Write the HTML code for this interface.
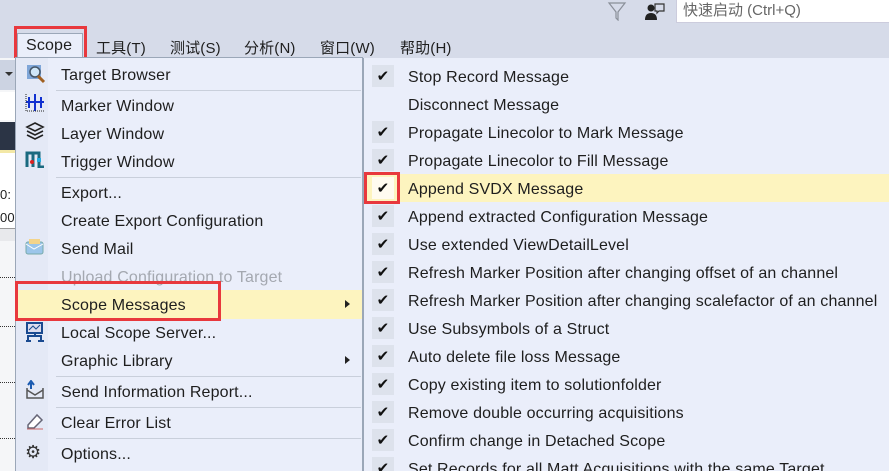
<!DOCTYPE html>
<html><head><meta charset="utf-8"><style>
*{margin:0;padding:0;box-sizing:border-box}
html,body{width:889px;height:471px;overflow:hidden}
body{background:#d6dbe9;position:relative;font-family:"Liberation Sans","Noto Sans CJK SC",sans-serif;font-size:16px;color:#1e1e1e;letter-spacing:0.15px}
.abs{position:absolute}
.mb{top:38px;font-size:15px;color:#1e1e1e}
.mm{left:15px;top:57px;width:348px;height:414px;background:#eaeefa;border:1px solid #9ba7b8;border-bottom:none}
.it{position:absolute;left:45px;height:28px;line-height:28px;white-space:nowrap}
.sep{position:absolute;left:40px;width:305px;height:1px;background:#c9cfdb}
.sm{left:363px;top:58px;width:526px;height:413px;background:#eaeefa;border-left:1px solid #9ba7b8}
.row{position:absolute;left:0;width:526px;height:28px;line-height:28px;white-space:nowrap}
.ck{position:absolute;left:8px;top:3px;width:22px;height:22px;background:#dde2ec;text-align:center;line-height:22px;font-size:15px;color:#111;font-family:"DejaVu Sans",sans-serif}
.tx{position:absolute;left:44px;top:2px}
.red{border:3px solid #e8383d;position:absolute}
</style></head><body>
<svg class="abs" style="left:607px;top:1px" width="20" height="20"><path d="M2 2H18L11 11V19L9 17V11Z" fill="none" stroke="#8a8f99" stroke-width="1.2"/></svg>
<svg class="abs" style="left:644px;top:3px" width="22" height="18"><circle cx="7" cy="5" r="3.5" fill="#222"/><path d="M1 17Q1 10 7 10Q13 10 13 17Z" fill="#222"/><path d="M11 1H20V8H15L13 10V8H11Z" fill="none" stroke="#333" stroke-width="1.2"/></svg>
<div class="abs" style="left:676px;top:0;width:213px;height:23px;background:#fff;border-left:1px solid #ccd;border-bottom:1px solid #ccd;color:#666;font-size:15px;line-height:22px;padding-left:6px;letter-spacing:0">快速启动 (Ctrl+Q)</div>
<div class="abs" style="left:17px;top:33px;width:66px;height:25px;background:#eaeefa;border:1px solid #9ba7b8;border-bottom:none"></div>
<div class="abs mb" style="left:26px;top:37px;font-size:16px">Scope</div>
<div class="abs mb" style="left:96px;top:37px">工具(T)</div>
<div class="abs mb" style="left:170px;top:37px">测试(S)</div>
<div class="abs mb" style="left:244px;top:37px">分析(N)</div>
<div class="abs mb" style="left:320px;top:37px">窗口(W)</div>
<div class="abs mb" style="left:400px;top:37px">帮助(H)</div>
<div class="red" style="left:14px;top:26px;width:73px;height:36px"></div>
<div class="abs" style="left:0;top:58px;width:15px;height:413px;background:#f5f6f8"></div>
<div class="abs" style="left:0;top:60px;width:15px;height:30px;background:#ccd3e2"></div>
<div class="abs" style="left:5px;top:72px;width:0;height:0;border-left:4px solid transparent;border-right:4px solid transparent;border-top:4px solid #333"></div>
<div class="abs" style="left:0;top:92px;width:15px;height:28px;background:#fff"></div>
<div class="abs" style="left:0;top:122px;width:15px;height:28px;background:#2b3445"></div>
<div class="abs" style="left:0;top:150px;width:15px;height:3px;background:#f3e8a6"></div>
<div class="abs" style="left:0;top:153px;width:15px;height:30px;background:#fff"></div>
<div class="abs" style="left:0;top:183px;width:15px;height:24px;background:#fff;font-size:13px;line-height:24px">0:</div>
<div class="abs" style="left:0;top:207px;width:15px;height:22px;background:#fff;border-bottom:1px solid #999;font-size:13px;line-height:22px">00</div>
<div class="abs" style="left:0;top:229px;width:15px;height:12px;background:#e8e9ec"></div>
<div class="abs" style="left:0;top:277px;width:15px;border-top:1px dotted #333"></div>
<div class="abs" style="left:0;top:326px;width:15px;border-top:1px dotted #333"></div>
<div class="abs" style="left:0;top:382px;width:15px;border-top:1px dotted #333"></div>
<div class="abs" style="left:0;top:438px;width:15px;border-top:1px dotted #333"></div>
<div class="abs mm">
<div style="position:absolute;left:0;top:0;width:32px;height:413px;background:#e4e9f6"></div>
<div style="position:absolute;left:0;top:232px;width:346px;height:29px;background:#fdf4bf"></div>
<svg style="position:absolute;left:10px;top:6px" width="20" height="20"><rect x="1" y="1" width="14" height="14" fill="#7fa6d8"/><circle cx="9" cy="8" r="5" fill="#cfe6f8" stroke="#456" stroke-width="1.5"/><path d="M12 12L18 18" stroke="#a06020" stroke-width="3"/></svg>
<div class="it" style="top:4px">Target Browser</div>
<div class="sep" style="top:32px"></div>
<svg style="position:absolute;left:8px;top:35px" width="22" height="20"><path d="M2 9H20M11 1V18M5 4V15M17 4V15" stroke="#1030d0" stroke-width="2"/><path d="M2 1V18H20" stroke="#222" stroke-width="1" stroke-dasharray="1 1" fill="none"/></svg>
<div class="it" style="top:35px">Marker Window</div>
<svg style="position:absolute;left:9px;top:64px" width="20" height="18"><path d="M10 1L18 5L10 9L2 5Z M2 9L10 13L18 9 M2 13L10 17L18 13" fill="none" stroke="#222" stroke-width="1.6"/></svg>
<div class="it" style="top:63px">Layer Window</div>
<svg style="position:absolute;left:9px;top:92px" width="20" height="18"><path d="M2 17V3H8V17 M8 3H14V17H19" fill="none" stroke="#1a6a80" stroke-width="3"/><circle cx="7" cy="12" r="2" fill="#d22"/><rect x="12" y="8" width="4" height="4" fill="#2ad"/></svg>
<div class="it" style="top:91px">Trigger Window</div>
<div class="sep" style="top:119px"></div>
<div class="it" style="top:122px">Export...</div>
<div class="it" style="top:150px">Create Export Configuration</div>
<svg style="position:absolute;left:9px;top:180px" width="20" height="18"><rect x="1" y="4" width="17" height="12" rx="2" fill="#9cc6ea" stroke="#7aa"/><path d="M1 6L9 11L18 6" fill="none" stroke="#fff"/><rect x="4" y="1" width="11" height="5" fill="#f3d48a"/></svg>
<div class="it" style="top:178px">Send Mail</div>
<div class="it" style="top:206px;color:#a4a8b0">Upload Configuration to Target</div>
<div class="it" style="top:234px">Scope Messages</div>
<div style="position:absolute;left:329px;top:242px;width:0;height:0;border-top:4px solid transparent;border-bottom:4px solid transparent;border-left:5px solid #222"></div>
<svg style="position:absolute;left:9px;top:264px" width="20" height="20"><rect x="2" y="1" width="15" height="10" fill="#dde" stroke="#1a4a90" stroke-width="2"/><path d="M4 8L8 4L11 7L15 3" stroke="#1a4a90" fill="none"/><path d="M10 11V14M2 14H17M3 14V19M16 14V19M1 19H6M13 19H19" stroke="#1a4a90" stroke-width="2"/></svg>
<div class="it" style="top:262px">Local Scope Server...</div>
<div class="it" style="top:290px">Graphic Library</div>
<div style="position:absolute;left:329px;top:298px;width:0;height:0;border-top:4px solid transparent;border-bottom:4px solid transparent;border-left:5px solid #222"></div>
<div class="sep" style="top:318px"></div>
<svg style="position:absolute;left:9px;top:322px" width="20" height="20"><path d="M2 8V18H18V8" fill="none" stroke="#555" stroke-width="1.5"/><path d="M2 10L10 15L18 10" fill="none" stroke="#555" stroke-width="1.5"/><path d="M6 9V3M3 5L6 1L9 5" fill="none" stroke="#1a5ab0" stroke-width="2"/></svg>
<div class="it" style="top:321px">Send Information Report...</div>
<div class="sep" style="top:349px"></div>
<svg style="position:absolute;left:9px;top:354px" width="20" height="18"><path d="M3 13L12 3L17 8L9 16H3Z" fill="#fff" stroke="#667" stroke-width="1.5"/><path d="M2 17H18" stroke="#c66" stroke-width="1"/></svg>
<div class="it" style="top:352px">Clear Error List</div>
<div class="sep" style="top:380px"></div>
<div style="position:absolute;left:9px;top:385px;font-size:18px;line-height:18px;color:#333">⚙</div>
<div class="it" style="top:383px">Options...</div>
</div>
<div class="red" style="left:15px;top:281px;width:206px;height:40px"></div>
<div class="abs sm">
<div class="row" style="top:4px"><div class="ck">✔</div><div class="tx">Stop Record Message</div></div>
<div class="row" style="top:32px"><div class="ck" style="background:none"></div><div class="tx">Disconnect Message</div></div>
<div class="row" style="top:60px"><div class="ck">✔</div><div class="tx">Propagate Linecolor to Mark Message</div></div>
<div class="row" style="top:88px"><div class="ck">✔</div><div class="tx">Propagate Linecolor to Fill Message</div></div>
<div class="row" style="top:116px;background:#fdf4bf"><div class="ck" style="background:#fffbf0">✔</div><div class="tx">Append SVDX Message</div></div>
<div class="row" style="top:144px"><div class="ck">✔</div><div class="tx">Append extracted Configuration Message</div></div>
<div class="row" style="top:172px"><div class="ck">✔</div><div class="tx">Use extended ViewDetailLevel</div></div>
<div class="row" style="top:200px"><div class="ck">✔</div><div class="tx">Refresh Marker Position after changing offset of an channel</div></div>
<div class="row" style="top:228px"><div class="ck">✔</div><div class="tx">Refresh Marker Position after changing scalefactor of an channel</div></div>
<div class="row" style="top:256px"><div class="ck">✔</div><div class="tx">Use Subsymbols of a Struct</div></div>
<div class="row" style="top:284px"><div class="ck">✔</div><div class="tx">Auto delete file loss Message</div></div>
<div class="row" style="top:312px"><div class="ck">✔</div><div class="tx">Copy existing item to solutionfolder</div></div>
<div class="row" style="top:340px"><div class="ck">✔</div><div class="tx">Remove double occurring acquisitions</div></div>
<div class="row" style="top:368px"><div class="ck">✔</div><div class="tx">Confirm change in Detached Scope</div></div>
<div class="row" style="top:396px"><div class="ck">✔</div><div class="tx">Set Records for all Matt Acquisitions with the same Target</div></div>
</div>
<div class="red" style="left:364px;top:172px;width:36px;height:32px"></div>
</body></html>
